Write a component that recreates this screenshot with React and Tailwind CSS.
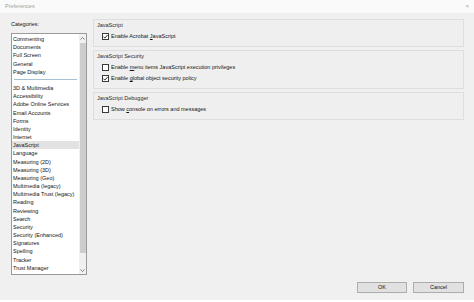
import React from "react";

const items1 = ["Commenting", "Documents", "Full Screen", "General", "Page Display"];
const items2 = [
  "3D & Multimedia", "Accessibility", "Adobe Online Services", "Email Accounts", "Forms",
  "Identity", "Internet", "JavaScript", "Language", "Measuring (2D)", "Measuring (3D)",
  "Measuring (Geo)", "Multimedia (legacy)", "Multimedia Trust (legacy)", "Reading",
  "Reviewing", "Search", "Security", "Security (Enhanced)", "Signatures", "Spelling",
  "Tracker", "Trust Manager",
];

function Row({ label, selected }) {
  return (
    <div className={"h-[8.18px] leading-[8.18px] pl-[1px] whitespace-nowrap " + (selected ? "bg-[#e2e2e2]" : "")}>
      {label}
    </div>
  );
}

function Check({ checked }) {
  return (
    <svg width="7" height="7" viewBox="0 0 7 7" className="shrink-0">
      <rect x="0.5" y="0.5" width="6" height="6" fill="white" stroke="#3a3a3a" strokeWidth="1" />
      {checked && (
        <path d="M1.4 3.6 L2.9 5.1 L5.7 1.9" fill="none" stroke="#1a1a1a" strokeWidth="0.9" />
      )}
    </svg>
  );
}

function CbRow({ checked, children }) {
  return (
    <div className="h-[11px] flex items-center pl-[8px] gap-[2px] text-[#151515] whitespace-nowrap">
      <Check checked={checked} />
      <span>{children}</span>
    </div>
  );
}

function Group({ title, children }) {
  return (
    <div className="border border-[#dedede] bg-[#efefef] pt-[1px] pb-[4px]">
      <div className="h-[8px] leading-[8px] pl-[3px] text-[#2a2a2a]">{title}</div>
      <div className="mt-[2px]">{children}</div>
    </div>
  );
}

export default function App() {
  return (
    <div
      className="w-[474px] h-[302px] bg-[#f0f0f0] flex flex-col text-[5.5px] text-[#151515]"
      style={{ fontFamily: '"Liberation Sans", Arial, sans-serif' }}
    >
      <div className="h-[13px] bg-[#fafafa] flex items-center justify-between pl-[5px] pr-[5px]">
        <span className="text-[#a0a0a0]">Preferences</span>
        <span className="text-[#a8a8a8] text-[6px]">×</span>
      </div>
      <div className="h-[263px] flex">
        <div className="ml-[11px] w-[76px] pt-[7px]">
          <div className="h-[8px] leading-[8px]">Categories:</div>
          <div className="mt-[5px] h-[242px] border border-[#9a9a9a] bg-white flex">
            <div className="flex-1 pt-[1px] min-w-0">
              {items1.map((t) => (
                <Row key={t} label={t} />
              ))}
              <div className="h-[8.18px] flex items-center px-[2px]">
                <div className="h-[1px] w-full bg-[#a8c0d4]" />
              </div>
              {items2.map((t) => (
                <Row key={t} label={t} selected={t === "JavaScript"} />
              ))}
            </div>
            <div className="w-[7px] bg-[#f0f0f0] flex flex-col items-center">
              <div className="h-[9px] flex items-center justify-center">
                <svg width="5" height="3" viewBox="0 0 10 6">
                  <path d="M1 5 L5 1 L9 5" fill="none" stroke="#606060" strokeWidth="1.5" />
                </svg>
              </div>
              <div className="w-[6px] h-[210px] bg-[#cdcdcd]" />
              <div className="flex-1 flex items-end justify-center pb-[2px]">
                <svg width="5" height="3" viewBox="0 0 10 6">
                  <path d="M1 1 L5 5 L9 1" fill="none" stroke="#606060" strokeWidth="1.5" />
                </svg>
              </div>
            </div>
          </div>
        </div>
        <div className="ml-[6px] w-[371px] pt-[6px] flex flex-col gap-[3px]">
          <Group title="JavaScript">
            <CbRow checked>
              Enable Acrobat <span className="underline">J</span>avaScript
            </CbRow>
          </Group>
          <Group title="JavaScript Security">
            <CbRow>
              Enable <span className="underline">m</span>enu items JavaScript execution privileges
            </CbRow>
            <CbRow checked>
              Enable <span className="underline">g</span>lobal object security policy
            </CbRow>
          </Group>
          <Group title="JavaScript Debugger">
            <CbRow>
              Show <span className="underline">c</span>onsole on errors and messages
            </CbRow>
          </Group>
        </div>
      </div>
      <div className="pt-[6px] pr-[10px] flex justify-end gap-[6px]">
        <div className="w-[50px] h-[11px] bg-[#e1e1e1] border border-[#adadad] flex items-center justify-center">OK</div>
        <div className="w-[51px] h-[11px] bg-[#e1e1e1] border border-[#adadad] flex items-center justify-center">Cancel</div>
      </div>
      <div className="flex-1" />
      <div className="h-[2px] bg-white" />
    </div>
  );
}
